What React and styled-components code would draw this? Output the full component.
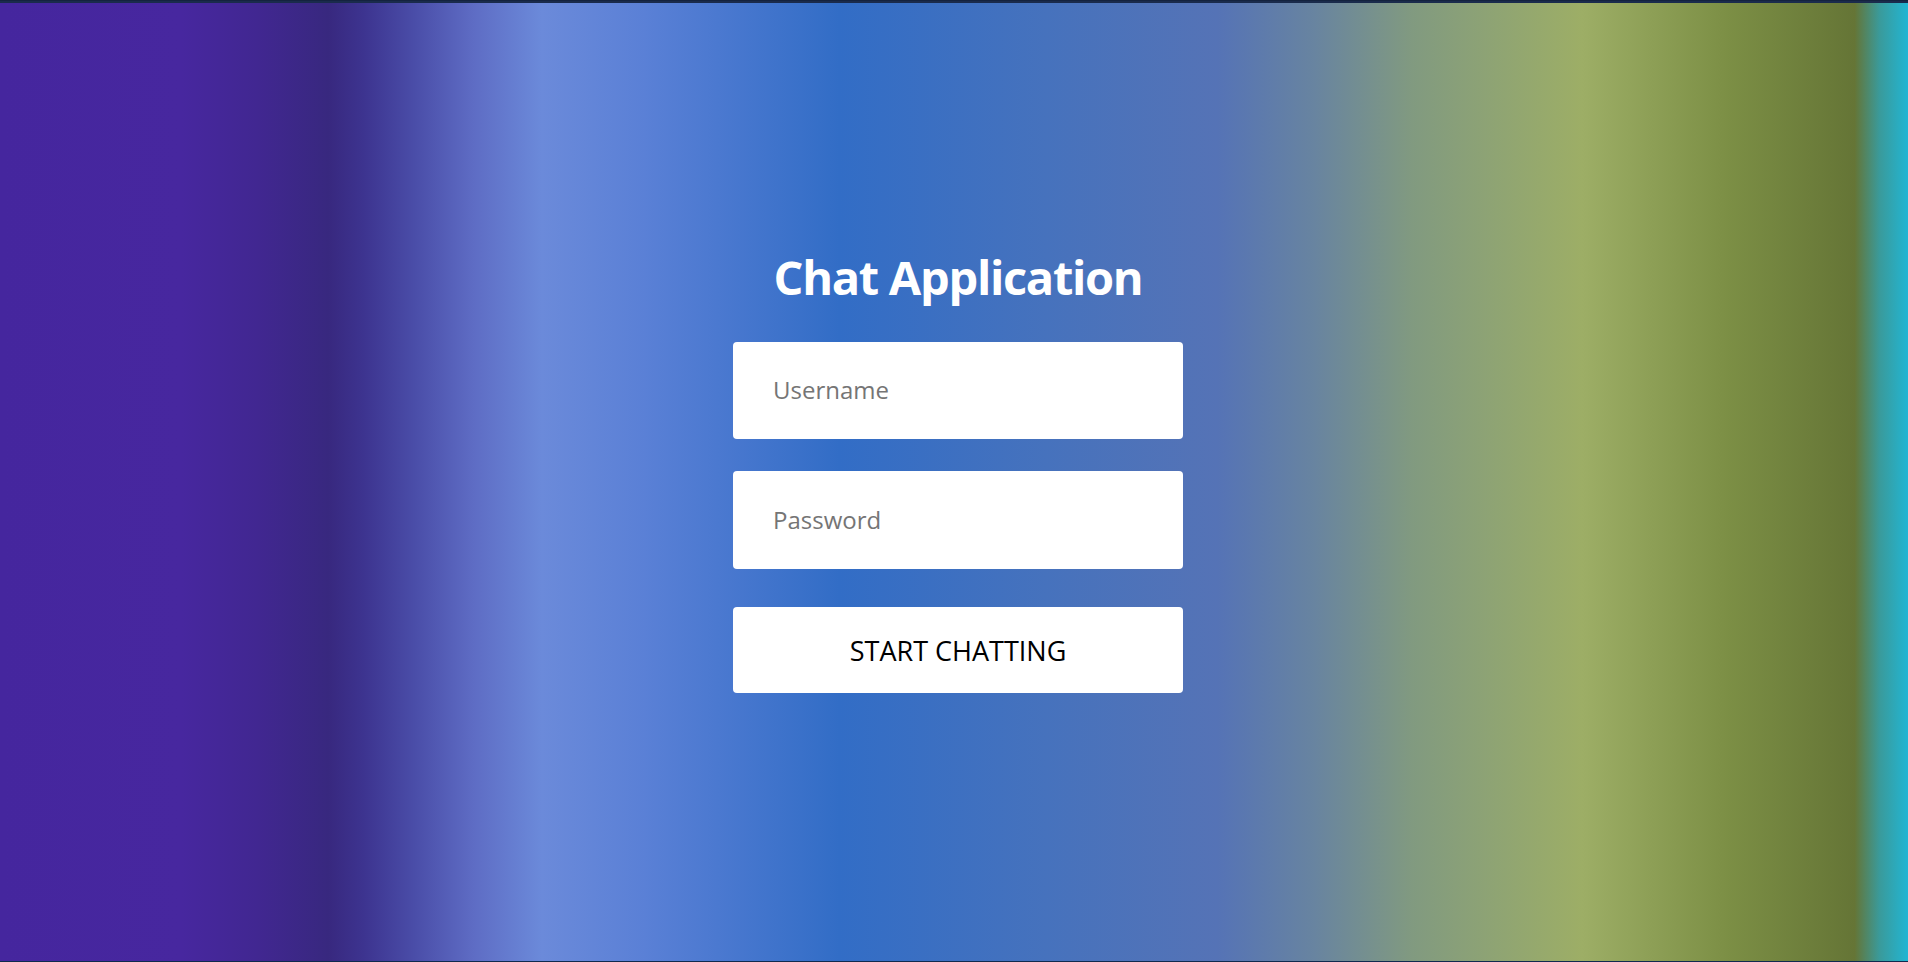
import React from "react";
import styled, { createGlobalStyle } from "styled-components";

const GlobalStyle = createGlobalStyle`
  html, body {
    margin: 0;
    padding: 0;
    height: 100%;
    overflow: hidden;
  }
  #root {
    height: 100%;
  }
`;

const Frame = styled.div`
  height: 100vh;
  display: flex;
  flex-direction: column;
`;

const TopEdge = styled.div`
  height: 3px;
  flex: none;
  background: #1a2b4c;
  border-top: 1px solid #14233f;
  box-sizing: border-box;
`;

const BottomEdge = styled.div`
  height: 1px;
  flex: none;
  background: #0f2a4f;
`;

const Stage = styled.main`
  flex: 1;
  display: flex;
  flex-direction: column;
  align-items: center;
  padding: 250px 0 0 8px;
  background: linear-gradient(
    90deg,
    #45269e 0%,
    #47279f 9.5%,
    #412791 13.5%,
    #38287f 17.2%,
    #3d3490 19.1%,
    #4a4da8 21.7%,
    #5e6cc4 24.8%,
    #6b8ada 28.4%,
    #5a80d6 33.8%,
    #326dc6 44%,
    #4672bd 54.8%,
    #5573b6 63.8%,
    #6884a0 68.9%,
    #819a80 74%,
    #9dae66 82.9%,
    #7c8f45 90.5%,
    #657536 97.2%,
    #3a9a9a 98.5%,
    #22b5d3 100%
  );
  font-family: "Open Sans", "Noto Sans", Arial, sans-serif;
`;

const LoginForm = styled.form`
  display: flex;
  flex-direction: column;
  align-items: center;
  width: 450px;
`;

const Title = styled.h1`
  margin: 0 0 41px;
  color: #ffffff;
  font-size: 47px;
  line-height: 48px;
  font-weight: 700;
  letter-spacing: -1.3px;
  white-space: nowrap;
`;

const Field = styled.input`
  width: 100%;
  height: ${(p) => p.$h}px;
  margin: 0 0 ${(p) => p.$gap}px;
  box-sizing: border-box;
  padding: 0 0 2px 40px;
  border: none;
  border-radius: 4px;
  background: #ffffff;
  outline: none;
  font-family: inherit;
  font-size: 24px;
  color: #222;

  &::placeholder {
    color: #757575;
  }
`;

const StartButton = styled.button`
  width: 100%;
  height: 86px;
  border: none;
  border-radius: 4px;
  background: #ffffff;
  color: #000000;
  font-family: inherit;
  font-size: 27px;
  cursor: pointer;
`;

export default function App() {
  return (
    <>
      <GlobalStyle />
      <Frame>
        <TopEdge />
        <Stage>
          <LoginForm onSubmit={(e) => e.preventDefault()}>
            <Title>Chat Application</Title>
            <Field type="text" placeholder="Username" $h={97} $gap={32} />
            <Field type="password" placeholder="Password" $h={98} $gap={38} />
            <StartButton type="submit">START CHATTING</StartButton>
          </LoginForm>
        </Stage>
        <BottomEdge />
      </Frame>
    </>
  );
}
